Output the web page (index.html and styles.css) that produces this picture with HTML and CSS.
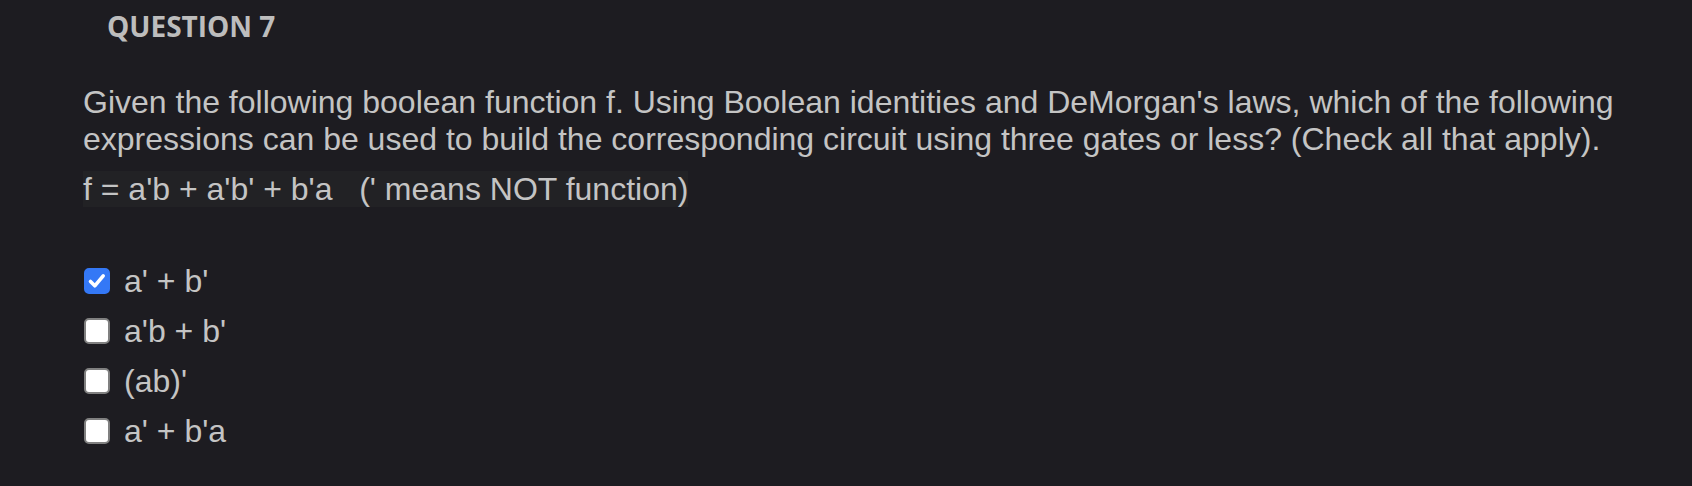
FILE: index.html
```html
<!DOCTYPE html>
<html lang="en">
<head>
    <meta charset="UTF-8">
    <meta name="viewport" content="width=device-width, initial-scale=1.0">
    <title>Question 7</title>
    <link rel="stylesheet" href="styles.css">
</head>
<body>

    <h2 class="question-title">QUESTION 7</h2>

    <div class="question-body">
        <p class="prompt">Given the following boolean function f. Using Boolean identities and DeMorgan's laws, which of the following expressions can be used to build the corresponding circuit using three gates or less? (Check all that apply).</p>
        <div class="formula-line"><span class="formula">f = a'b + a'b' + b'a &nbsp; (' means NOT function)</span></div>

        <ul class="answers">
            <li class="answer">
                <span class="box checked">
                    <svg width="20" height="20" viewBox="0 0 20 20"><path d="M3.5 10.5 L7.8 14.8 L16.2 4.8" fill="none" stroke="#fff" stroke-width="3.6" stroke-linecap="round" stroke-linejoin="round"/></svg>
                </span>
                <span class="label">a' + b'</span>
            </li>
            <li class="answer">
                <span class="box"></span>
                <span class="label">a'b + b'</span>
            </li>
            <li class="answer">
                <span class="box"></span>
                <span class="label">(ab)'</span>
            </li>
            <li class="answer">
                <span class="box"></span>
                <span class="label">a' + b'a</span>
            </li>
        </ul>
    </div>

</body>
</html>
```

FILE: styles.css
```css
body {
    margin: 0;
    background-color: #1d1c21;
    color: #c4c4c4;
    font-family: "Liberation Sans", Arial, sans-serif;
    font-size: 32px;
}
.question-title {
    margin: 0;
    padding: 7px 0 0 107px;
    font-family: "Open Sans", sans-serif;
    font-weight: 700;
    font-size: 28px;
    line-height: 38px;
    color: #bdbdbd;
}
.question-body {
    padding: 39px 0 0 83px;
}
.prompt {
    margin: 0;
    line-height: 37px;
}
.formula-line {
    margin-top: 13px;
    line-height: 36px;
}
.formula {
    background-color: #222225;
}
.answers {
    list-style: none;
    margin: 49px 0 0 0;
    padding: 0;
}
.answer {
    display: flex;
    align-items: center;
    gap: 14px;
    height: 50px;
    line-height: 36px;
}
.box {
    box-sizing: border-box;
    width: 26px;
    height: 26px;
    margin-left: 1px;
    border: 2px solid #808080;
    border-radius: 5px;
    background: #fff;
    display: flex;
    align-items: center;
    justify-content: center;
}
.box.checked {
    background: #3478f6;
    border-color: #3478f6;
}
```
